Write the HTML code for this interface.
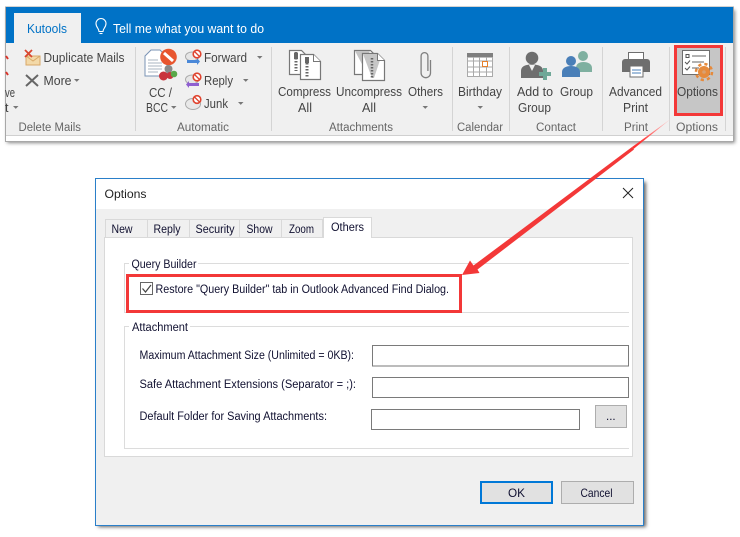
<!DOCTYPE html>
<html><head><meta charset="utf-8"><title>Options</title>
<style>
html,body{margin:0;padding:0;background:#fff;width:740px;height:537px;overflow:hidden}
svg{display:block}
text{font-family:"Liberation Sans",sans-serif;white-space:pre}
.r{font-size:12.5px;fill:#444}
.g{font-size:11.5px;fill:#666}
.d{font-size:11.5px;fill:#101030}
</style></head><body>
<svg width="740" height="537" viewBox="0 0 740 537" xmlns="http://www.w3.org/2000/svg">
<defs>
<filter id="b" x="-5%" y="-5%" width="110%" height="110%"><feGaussianBlur stdDeviation="1.8"/></filter>
<linearGradient id="fade" gradientUnits="userSpaceOnUse" x1="672" y1="118" x2="640" y2="141"><stop offset="0" stop-color="#fdd"/><stop offset="1" stop-color="#f33"/></linearGradient>
<g id="arrow"><path d="M0 0h5.500l-2.750 2.900z" fill="#777"/></g>
</defs>

<!-- ribbon window -->
<rect x="7" y="10" width="728" height="133" fill="#888" filter="url(#b)"/>
<rect x="5.500" y="7" width="728" height="134.500" fill="#fff" stroke="#a8a8a8"/>
<rect x="6" y="7" width="727" height="36" fill="#0072c6"/>
<rect x="6" y="43" width="727" height="92" fill="#f0f0f0"/>
<rect x="6" y="135" width="727" height="1" fill="#d0d0d0"/>
<rect x="14" y="13" width="67" height="30" fill="#f0f0f0"/>
<text x="27" y="33" textLength="40" lengthAdjust="spacingAndGlyphs" style="font-size:13px;fill:#0072c6">Kutools</text>
<g fill="none" stroke="#fff" stroke-width="1.100"><path d="M99 31.500c0-3-3-4-3-8a5 5 0 0 1 10 0c0 4-3 5-3 8z"/><path d="M99.500 33.500h3"/></g>
<text x="113" y="33" textLength="151" lengthAdjust="spacingAndGlyphs" style="font-size:13px;fill:#fff">Tell me what you want to do</text>

<!-- separators -->
<g fill="#d4d4d4"><rect x="135" y="47" width="1" height="84"/><rect x="271" y="47" width="1" height="84"/><rect x="452" y="47" width="1" height="84"/><rect x="509" y="47" width="1" height="84"/><rect x="602" y="47" width="1" height="84"/><rect x="669" y="47" width="1" height="84"/><rect x="725" y="47" width="1" height="84"/></g>

<!-- delete mails -->
<path d="M6 56l2 3M6 72l2 3" stroke="#d9352a" stroke-width="2"/>
<rect x="26" y="56" width="14" height="9" fill="#f3d9a8" stroke="#d8a868"/>
<path d="M26 56l7 5 7-5" fill="none" stroke="#d8a868"/>
<path d="M25 50l7 7M32 50l-7 7" stroke="#d9472f" stroke-width="1.800"/>
<text class="r" x="43.500" y="62" textLength="81" lengthAdjust="spacingAndGlyphs">Duplicate Mails</text>
<path d="M26 75l12 11M38 75l-12 11" stroke="#666" stroke-width="2"/>
<text class="r" x="43.500" y="85" textLength="28" lengthAdjust="spacingAndGlyphs">More</text>
<use href="#arrow" x="74" y="79"/>
<text class="r" x="5" y="97" textLength="10" lengthAdjust="spacingAndGlyphs">ve</text>
<text class="r" x="5" y="112">t</text>
<use href="#arrow" x="13" y="106"/>
<text class="g" x="18.500" y="131" textLength="62.500" lengthAdjust="spacingAndGlyphs">Delete Mails</text>

<!-- automatic: CC/BCC icon -->
<path d="M151 50h9l7 7v19h-22v-20z" fill="#fff" stroke="#7a93b5"/>
<path d="M148 60h10M148 63h14M148 66h14M148 69h14M148 72h10" stroke="#aab4c2"/>
<circle cx="168.500" cy="57" r="8.300" fill="#e8562f"/>
<path d="M164 53l9 8" stroke="#fff" stroke-width="3"/>
<circle cx="168.500" cy="69" r="4" fill="#8a8a8a"/>
<circle cx="163.500" cy="76" r="4.500" fill="#c9343c"/>
<circle cx="170" cy="75.500" r="3.500" fill="#c9343c"/>
<circle cx="174" cy="74" r="3.300" fill="#5aa84a"/>
<text class="r" x="149" y="97" textLength="23" lengthAdjust="spacingAndGlyphs">CC /</text>
<text class="r" x="146" y="112" textLength="22" lengthAdjust="spacingAndGlyphs">BCC</text>
<use href="#arrow" x="171" y="106"/>

<!-- forward / reply / junk -->
<g>
<ellipse cx="192" cy="56.500" rx="6.500" ry="4.500" fill="#e6e6e6" stroke="#aaa"/>
<path d="M187 60h10v-2l3 3.500-3 3.500v-2h-10z" fill="#4a88d8"/>
<circle cx="197" cy="54" r="3.800" fill="#fff" stroke="#e0442f" stroke-width="1.600"/><path d="M194.500 51.500l5 5" stroke="#e0442f" stroke-width="1.300"/>
<ellipse cx="192" cy="79.500" rx="6.500" ry="4.500" fill="#e6e6e6" stroke="#aaa"/>
<path d="M199 83h-10v-2l-3 3.500 3 3.500v-2h10z" fill="#8f5fd0"/>
<circle cx="197" cy="77" r="3.800" fill="#fff" stroke="#e0442f" stroke-width="1.600"/><path d="M194.500 74.500l5 5" stroke="#e0442f" stroke-width="1.300"/>
<ellipse cx="193" cy="104" rx="7.500" ry="5.500" fill="#e8e8e8" stroke="#aaa"/>
<circle cx="197" cy="99.500" r="3.800" fill="#fff" stroke="#e0442f" stroke-width="1.600"/><path d="M194.500 97l5 5" stroke="#e0442f" stroke-width="1.300"/>
</g>
<text class="r" x="204" y="62" textLength="43" lengthAdjust="spacingAndGlyphs">Forward</text>
<use href="#arrow" x="257" y="56"/>
<text class="r" x="204" y="85" textLength="29" lengthAdjust="spacingAndGlyphs">Reply</text>
<use href="#arrow" x="243" y="79"/>
<text class="r" x="204" y="108" textLength="24" lengthAdjust="spacingAndGlyphs">Junk</text>
<use href="#arrow" x="238" y="102"/>
<text class="g" x="177" y="131" textLength="52" lengthAdjust="spacingAndGlyphs">Automatic</text>

<!-- attachments: compress -->
<path d="M289.500 50.500h12l5 5v19h-17z" fill="#fff" stroke="#777" stroke-width="1.200"/>
<path d="M296 52v19" stroke="#666" stroke-width="3" stroke-dasharray="1.500 1.500"/>
<rect x="294" y="53" width="4" height="6" fill="#666"/>
<path d="M300.500 54.500h13l7 7v18h-20z" fill="#fff" stroke="#777" stroke-width="1.200"/>
<path d="M313.500 54.500v7h7" fill="#fff" stroke="#777"/>
<path d="M307 57v20" stroke="#666" stroke-width="3" stroke-dasharray="1.500 1.500"/>
<rect x="305" y="57" width="4" height="6" fill="#666"/>
<!-- uncompress -->
<path d="M354.500 50.500h16l5 5v19h-21z" fill="#fff" stroke="#777" stroke-width="1.200"/>
<path d="M355 51h15l-7 15z" fill="#c4c4c4"/>
<path d="M362.500 53.500h15l7 7v20h-22z" fill="#fff" stroke="#777" stroke-width="1.200"/>
<path d="M363 54h14l3 6-6 18-2 0z" fill="#c6c6c6"/>
<path d="M377.500 53.500v7h7" fill="#fff" stroke="#777"/>
<path d="M372 58v20" stroke="#666" stroke-width="2.500" stroke-dasharray="1.500 1.500"/>
<!-- paperclip -->
<path d="M430.500 60v13a4.700 4.700 0 0 1-9.400 0V56a3.400 3.400 0 0 1 6.800 0v15" fill="none" stroke="#808080" stroke-width="1.300"/>
<text class="r" x="278" y="96" textLength="53" lengthAdjust="spacingAndGlyphs">Compress</text>
<text class="r" x="298" y="112" textLength="14" lengthAdjust="spacingAndGlyphs">All</text>
<text class="r" x="336" y="96" textLength="66" lengthAdjust="spacingAndGlyphs">Uncompress</text>
<text class="r" x="362" y="112" textLength="14" lengthAdjust="spacingAndGlyphs">All</text>
<text class="r" x="408" y="96" textLength="35" lengthAdjust="spacingAndGlyphs">Others</text>
<use href="#arrow" x="422.500" y="106"/>
<text class="g" x="329" y="131" textLength="64" lengthAdjust="spacingAndGlyphs">Attachments</text>

<!-- calendar -->
<rect x="467" y="53" width="26" height="24" fill="#fff"/>
<rect x="467" y="53" width="26" height="4.500" fill="#7f7f7f"/>
<path d="M467.500 57v20M473.500 57v20M479.500 57v20M486.500 57v20M492.500 57v20M467 61h26M467 67h26M467 72h26M467 76.500h26" stroke="#aaa" fill="none"/>
<rect x="482.500" y="61.500" width="5" height="5" fill="#fff" stroke="#e5802c"/>
<text class="r" x="458" y="96" textLength="44" lengthAdjust="spacingAndGlyphs">Birthday</text>
<use href="#arrow" x="477.500" y="106"/>
<text class="g" x="457" y="131" textLength="46" lengthAdjust="spacingAndGlyphs">Calendar</text>

<!-- contact -->
<circle cx="532" cy="58" r="6.300" fill="#6e6e6e"/>
<path d="M521 78v-7c0-5 5-6.500 11-6.500s11 1.500 11 6.500v7z" fill="#6e6e6e"/>
<path d="M529 65l3 6 3-6z" fill="#f0f0f0"/>
<path d="M543 69h4v4h4v4h-4v4h-4v-4h-4v-4h4z" fill="#6fa898" transform="translate(0 -1)"/>
<circle cx="583" cy="56" r="5" fill="#7fb0a0"/>
<path d="M576 72v-4c0-4 3-6 7.500-6s8.500 2 8.500 6v4z" fill="#7fb0a0"/>
<circle cx="571" cy="61" r="5" fill="#4a7fb8"/>
<path d="M562 77v-5c0-4 4-6 9-6s9 2 9 6v5z" fill="#4a7fb8"/>
<text class="r" x="517" y="96" textLength="36" lengthAdjust="spacingAndGlyphs">Add to</text>
<text class="r" x="518" y="112" textLength="33" lengthAdjust="spacingAndGlyphs">Group</text>
<text class="r" x="560" y="96" textLength="33" lengthAdjust="spacingAndGlyphs">Group</text>
<text class="g" x="536" y="131" textLength="40" lengthAdjust="spacingAndGlyphs">Contact</text>

<!-- print -->
<rect x="628.500" y="52.500" width="15" height="8" fill="#fff" stroke="#6e6e6e"/>
<path d="M622 62a3 3 0 0 1 3-3h22a3 3 0 0 1 3 3v10h-28z" fill="#6e6e6e"/>
<rect x="630" y="66" width="13" height="11" fill="#fff" stroke="#6e6e6e"/>
<path d="M632 70h9M632 73h9" stroke="#4a7fb8"/>
<text class="r" x="609" y="96" textLength="53" lengthAdjust="spacingAndGlyphs">Advanced</text>
<text class="r" x="623" y="112" textLength="25" lengthAdjust="spacingAndGlyphs">Print</text>
<text class="g" x="624" y="131" textLength="24" lengthAdjust="spacingAndGlyphs">Print</text>

<!-- options -->
<rect x="675" y="46" width="47" height="69" fill="#c6c6c6"/>
<rect x="682.500" y="50.500" width="27" height="24" fill="#fff" stroke="#6e6e6e"/>
<rect x="686" y="54.500" width="3" height="3" fill="none" stroke="#555"/>
<path d="M692 56h14M692 62h12M692 68h7" stroke="#666"/>
<path d="M685 62l2 2 3-3.500M685 68l2 2 3-3.500" fill="none" stroke="#555"/>
<circle cx="704" cy="72" r="6" fill="#e68a3c"/>
<circle cx="704" cy="72" r="8" fill="none" stroke="#e68a3c" stroke-width="2.500" stroke-dasharray="3.200 3.100"/>
<circle cx="704" cy="72" r="1.800" fill="#d9a070"/>
<text class="r" x="677" y="96" textLength="41" lengthAdjust="spacingAndGlyphs">Options</text>
<text class="g" x="676" y="131" textLength="42" lengthAdjust="spacingAndGlyphs">Options</text>
<rect x="675.500" y="46.500" width="46" height="68" fill="none" stroke="#f33838" stroke-width="3"/>

<!-- dialog -->
<rect x="98" y="182" width="548" height="345" fill="#666" filter="url(#b)"/>
<rect x="95.500" y="178.500" width="548" height="347" fill="#f0f0f0" stroke="#2a7fc9"/>
<rect x="96" y="179" width="547" height="30" fill="#fff"/>
<text class="d" x="104.500" y="198" textLength="42" lengthAdjust="spacingAndGlyphs" style="font-size:12px;fill:#222">Options</text>
<path d="M623 188l10 10M633 188l-10 10" stroke="#222" stroke-width="1"/>

<!-- tabs -->
<rect x="104.500" y="237.500" width="528" height="219" fill="#fff" stroke="#d9d9d9"/>
<g fill="#f0f0f0" stroke="#d9d9d9">
<rect x="105.500" y="219.500" width="42" height="18"/><rect x="147.500" y="219.500" width="42" height="18"/><rect x="189.500" y="219.500" width="50" height="18"/><rect x="239.500" y="219.500" width="42" height="18"/><rect x="281.500" y="219.500" width="41" height="18"/>
</g>
<path d="M323.500 238v-20.500h48V238" fill="#fff" stroke="#d9d9d9"/>
<rect x="324" y="236" width="47" height="3" fill="#fff"/>
<text class="d" x="111.500" y="233" textLength="21" lengthAdjust="spacingAndGlyphs">New</text>
<text class="d" x="153.500" y="233" textLength="27" lengthAdjust="spacingAndGlyphs">Reply</text>
<text class="d" x="195.500" y="233" textLength="39" lengthAdjust="spacingAndGlyphs">Security</text>
<text class="d" x="246.500" y="233" textLength="26" lengthAdjust="spacingAndGlyphs">Show</text>
<text class="d" x="289" y="233" textLength="25" lengthAdjust="spacingAndGlyphs">Zoom</text>
<text class="d" x="331" y="231" textLength="33" lengthAdjust="spacingAndGlyphs">Others</text>

<!-- groups -->
<path d="M629 263.500H124.500V312.500H629" fill="none" stroke="#dcdcdc"/>
<rect x="129" y="260" width="69" height="8" fill="#fff"/>
<text class="d" x="131.500" y="268" textLength="65" lengthAdjust="spacingAndGlyphs">Query Builder</text>
<path d="M629 326.500H124.500V448.500H629" fill="none" stroke="#dcdcdc"/>
<rect x="129" y="322" width="61" height="8" fill="#fff"/>
<text class="d" x="132" y="331" textLength="56" lengthAdjust="spacingAndGlyphs">Attachment</text>

<rect x="140.500" y="282.500" width="12" height="12" fill="#fff" stroke="#666"/>
<path d="M142.500 288.500l3 3.500 5.500-7" fill="none" stroke="#444" stroke-width="1.200"/>
<text class="d" x="155.500" y="293" textLength="293.500" lengthAdjust="spacingAndGlyphs">Restore "Query Builder" tab in Outlook Advanced Find Dialog.</text>
<rect x="127.500" y="275.500" width="333" height="36" fill="none" stroke="#f33838" stroke-width="3"/>

<text class="d" x="139.500" y="359" textLength="214.500" lengthAdjust="spacingAndGlyphs">Maximum Attachment Size (Unlimited = 0KB):</text>
<text class="d" x="139.500" y="388" textLength="216.500" lengthAdjust="spacingAndGlyphs">Safe Attachment Extensions (Separator = ;):</text>
<text class="d" x="139.500" y="420" textLength="187.500" lengthAdjust="spacingAndGlyphs">Default Folder for Saving Attachments:</text>
<g fill="#fff" stroke="#7a7a7a">
<rect x="372.500" y="345.500" width="256" height="20.500"/>
<rect x="372.500" y="377.500" width="256" height="20"/>
<rect x="371.500" y="409.500" width="208" height="20"/>
</g>
<rect x="595.500" y="405.500" width="31" height="22" fill="#e1e1e1" stroke="#adadad"/>
<text class="d" x="606" y="420" style="font-size:11.5px">...</text>
<rect x="481" y="482" width="71" height="21" fill="#e1e1e1" stroke="#0078d7" stroke-width="2"/>
<text class="d" x="508" y="497" textLength="17" lengthAdjust="spacingAndGlyphs" style="font-size:12px">OK</text>
<rect x="561.500" y="481.500" width="72" height="22" fill="#e1e1e1" stroke="#adadad"/>
<text class="d" x="580.500" y="497" textLength="32" lengthAdjust="spacingAndGlyphs" style="font-size:12px">Cancel</text>

<!-- arrow -->
<path d="M672 118L632 147L633.500 149z" fill="url(#fade)"/>
<path d="M462 275L470 260.500L473.500 265.500L632 147L634 149.500L477.500 269.500L479.500 273z" fill="#f33838"/>
</svg>
</body></html>
